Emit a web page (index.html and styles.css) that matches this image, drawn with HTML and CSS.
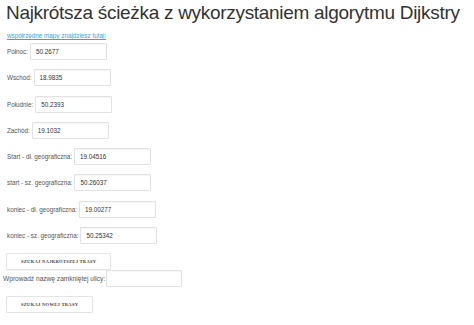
FILE: index.html
```html
<!DOCTYPE html>
<html>
	<head>
		<meta charset="utf-8" />
		<title>Najkrótsza ścieżka</title>
		<link rel="stylesheet" href="styles.css">
	</head>
	<body>
		<div class="page">
			<h1>Najkrótsza ścieżka z wykorzystaniem algorytmu Dijkstry</h1>
			<a href="javascript:;" class="mapLink">współrzędne mapy znajdziesz tutaj:</a>

			<div class="row first"><label>Północ:</label><input type="text" value="50.2677"></div>
			<div class="row"><label>Wschód:</label><input type="text" value="18.9835"></div>
			<div class="row"><label>Południe:</label><input type="text" value="50.2393"></div>
			<div class="row"><label>Zachód:</label><input type="text" value="19.1032"></div>

			<div class="row"><label>Start - dł. geograficzna:</label><input type="text" value="19.04516"></div>
			<div class="row"><label>start - sz. geograficzna:</label><input type="text" value="50.26037"></div>
			<div class="row"><label>koniec - dł. geograficzna:</label><input type="text" value="19.00277"></div>
			<div class="row"><label>koniec - sz. geograficzna:</label><input type="text" value="50.25342"></div>

			<button class="btn">Szukaj najkrótszej trasy</button>
			<div class="row street"><label>Wprowadź nazwę zamkniętej ulicy:</label><input type="text" value=""></div>
			<button class="btn btnNew">Szukaj nowej trasy</button>
		</div>
	</body>
</html>
```
FILE: styles.css
```css
*{
	margin: 0;
	padding: 0;
	box-sizing: border-box;
}
body{
	background-color: #fff;
	font-family: "Liberation Sans", Arial, sans-serif;
	color: #555;
}
.page{
	padding: 0 6px;
}
h1{
	margin-top: 2px;
	font-size: 19px;
	line-height: 22px;
	font-weight: normal;
	letter-spacing: -0.3px;
	color: #333;
	white-space: nowrap;
}
.mapLink{
	display: block;
	margin-top: 8px;
	margin-left: 1px;
	font-size: 6.3px;
	line-height: 8px;
	color: #3aa3cc;
	text-decoration: underline;
}
.row{
	display: flex;
	align-items: center;
	gap: 2px;
	height: 17px;
	margin-top: 9.3px;
}
.row.first{
	margin-top: 3px;
}
.row label{
	font-size: 6.3px;
	padding-left: 1px;
	color: #555;
}
.row input{
	width: 77px;
	height: 17px;
	border: 1px solid #e2e2e2;
	border-radius: 1px;
	box-shadow: inset 0 1px 1px rgba(0,0,0,0.04);
	padding: 0 5px;
	font-family: "Liberation Sans", Arial, sans-serif;
	font-size: 6.3px;
	color: #333;
	background-color: #fff;
	outline: none;
}
.btn{
	display: block;
	height: 17px;
	margin-top: 9px;
	padding: 0 14px;
	border: 1px solid #e4e4e4;
	border-radius: 1px;
	background-color: #fff;
	box-shadow: 0 1px 1px rgba(0,0,0,0.05);
	font-family: "Liberation Serif", "Times New Roman", serif;
	font-weight: bold;
	font-size: 4.6px;
	letter-spacing: 0.25px;
	text-transform: uppercase;
	color: #444;
	cursor: pointer;
}
.street{
	margin-top: 0;
}
.street label{
	margin-left: -3px;
	padding-left: 0;
	font-size: 6.6px;
}
.street input{
	width: 76px;
	margin-left: -1px;
}
.btnNew{
	margin-top: 9px;
}
```
